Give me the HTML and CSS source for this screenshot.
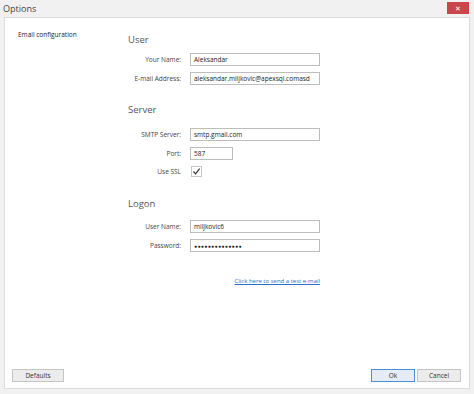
FILE: index.html
```html
<!DOCTYPE html>
<html>
<head>
<meta charset="utf-8">
<link rel="stylesheet" href="styles.css">
</head>
<body>
<div class="window">
  <div class="titlebar">
    <span class="title">Options</span>
    <span class="close">✕</span>
  </div>
  <div class="panel">
    <div class="content">
      <div class="nav">Email configuration</div>
      <div class="form">
        <div class="section-title first">User</div>
        <div class="grid">
          <label class="lbl">Your Name:</label>
          <div class="field wide">Aleksandar</div>
          <label class="lbl">E-mail Address:</label>
          <div class="field wide">aleksandar.miljkovic@apexsql.comasd</div>
        </div>
        <div class="section-title server">Server</div>
        <div class="grid">
          <label class="lbl">SMTP Server:</label>
          <div class="field wide">smtp.gmail.com</div>
          <label class="lbl">Port:</label>
          <div class="field narrow">587</div>
          <label class="lbl">Use SSL</label>
          <div class="check"><svg width="9" height="9" viewBox="0 0 9 9"><path d="M1.5 4.5 L3.6 6.8 L7.6 1.6" fill="none" stroke="#333" stroke-width="1.2"/></svg></div>
        </div>
        <div class="section-title logon">Logon</div>
        <div class="grid">
          <label class="lbl">User Name:</label>
          <div class="field wide">miljkovic6</div>
          <label class="lbl">Password:</label>
          <div class="field wide pw">●●●●●●●●●●●●●●</div>
        </div>
        <div class="linkrow"><a class="link" href="#">Click here to send a test e-mail</a></div>
      </div>
    </div>
    <div class="footer">
      <button class="btn">Defaults</button>
      <div class="right">
        <button class="btn ok">Ok</button>
        <button class="btn">Cancel</button>
      </div>
    </div>
  </div>
</div>
</body>
</html>
```
FILE: styles.css
```css
* { box-sizing: border-box; }
html, body { margin: 0; padding: 0; }
body {
  width: 474px; height: 394px;
  background: #f1f1f1;
  font-family: "Open Sans", "Noto Sans", sans-serif;
  color: #333;
  overflow: hidden;
}
.window { display: flex; flex-direction: column; height: 394px; }
.titlebar {
  height: 17px;
  display: flex; align-items: center; justify-content: space-between;
  padding: 0 5px 0 3px;
}
.title { font-size: 9px; color: #444; margin-top: -1px; }
.close {
  width: 22px; height: 12px; background: #c9464a; color: #fff;
  font-size: 7px; display: flex; align-items: center; justify-content: center;
  margin-top: -1px;
}
.panel {
  margin: 0 4px; height: 372px;
  background: #fff; border: 1px solid #dcdcdc;
  display: flex; flex-direction: column; justify-content: space-between;
}
.content { display: flex; }
.nav {
  width: 123px; padding: 12px 0 0 13px;
  font-size: 6.5px; color: #222;
}
.form { display: flex; flex-direction: column; }
.section-title { font-size: 9.5px; line-height: 13px; color: #555; }
.section-title.first { margin: 15px 0 7px; }
.section-title.server { margin: 18px 0 12px; }
.section-title.logon { margin: 20px 0 10px; }
.grid {
  display: grid; grid-template-columns: 53px auto;
  column-gap: 9px; row-gap: 6px; align-items: center;
}
.lbl { text-align: right; font-size: 6.5px; color: #444; white-space: nowrap; }
.field {
  height: 13px; border: 1px solid #bdbdbd; background: #fff;
  font-size: 6.5px; color: #222; padding: 0 3px; display: flex; align-items: center;
  white-space: nowrap; overflow: hidden;
}
.wide { width: 130px; }
.narrow { width: 43px; }
.pw { font-size: 5px; letter-spacing: 0.4px; }
.check {
  width: 11px; height: 11px; border: 1px solid #c8c8c8;
  display: flex; align-items: center; justify-content: center; margin-left: 1px;
}
.linkrow { margin-top: 25px; display: flex; justify-content: flex-end; width: 192px; }
.link { color: #2a6fc9; font-size: 6px; text-decoration: underline; }
.footer {
  display: flex; justify-content: space-between; align-items: center;
  padding: 0 8px 6px 7px;
}
.right { display: flex; gap: 2px; }
.btn {
  height: 13px; width: 52px; padding: 0;
  background: #ececec; border: 1px solid #c5c5c5;
  font-family: "Open Sans", "Noto Sans", sans-serif; font-size: 6.5px; color: #333;
}
.right .btn { width: 44px; }
.btn.ok { border-color: #4a90d9; background: #e5ecf5; }
```
